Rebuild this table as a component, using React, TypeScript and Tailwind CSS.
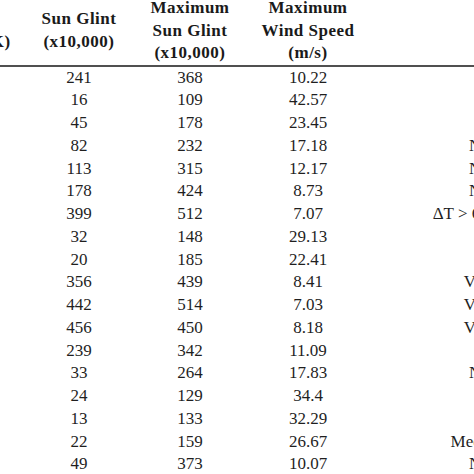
const rows: [string, string, string, string][] = [
  ['241', '368', '10.22', ''],
  ['16', '109', '42.57', ''],
  ['45', '178', '23.45', ''],
  ['82', '232', '17.18', 'No Glint'],
  ['113', '315', '12.17', 'No Glint'],
  ['178', '424', '8.73', 'No Glint'],
  ['399', '512', '7.07', 'ΔT > 6 K, No Glint'],
  ['32', '148', '29.13', ''],
  ['20', '185', '22.41', ''],
  ['356', '439', '8.41', 'Very High'],
  ['442', '514', '7.03', 'Very High'],
  ['456', '450', '8.18', 'Very High'],
  ['239', '342', '11.09', ''],
  ['33', '264', '17.83', 'No Glint'],
  ['24', '129', '34.4', ''],
  ['13', '133', '32.29', ''],
  ['22', '159', '26.67', 'Medium Glint'],
  ['49', '373', '10.07', 'No Glint'],
]

export default function App() {
  return (
    <div className="h-[474px] w-[474px] overflow-hidden bg-white font-['Liberation_Serif','Times_New_Roman',serif] text-[17px] text-[#1f1f1f]">
      <table className="-ml-[120px] -mt-[3px] w-[747px] table-fixed border-collapse">
        <colgroup>
          <col className="w-[143px]" />
          <col className="w-[112px]" />
          <col className="w-[110px]" />
          <col className="w-[126px]" />
          <col className="w-[256px]" />
        </colgroup>
        <thead>
          <tr className="h-[67px] border-b-2 border-[#505050] align-middle font-bold leading-[22.5px] tracking-[0.5px] text-[#1a1a1a]">
            <th className="whitespace-nowrap pr-[34px] text-center">
              Cloud
              <br />
              Temperature (K)
            </th>
            <th className="text-center">
              Sun Glint
              <br />
              (x10,000)
            </th>
            <th className="text-center">
              Maximum
              <br />
              Sun Glint
              <br />
              (x10,000)
            </th>
            <th className="text-center">
              Maximum
              <br />
              Wind Speed
              <br />
              (m/s)
            </th>
            <th className="text-center">Note</th>
          </tr>
        </thead>
        <tbody className="leading-[22.75px]">
          <tr className="h-px">
            <td colSpan={5} />
          </tr>
          {rows.map((r, i) => (
            <tr key={i}>
              <td className="text-center"></td>
              <td className="text-center">{r[0]}</td>
              <td className="text-center">{r[1]}</td>
              <td className="text-center">{r[2]}</td>
              <td className="whitespace-nowrap text-center">{r[3]}</td>
            </tr>
          ))}
        </tbody>
      </table>
    </div>
  )
}
